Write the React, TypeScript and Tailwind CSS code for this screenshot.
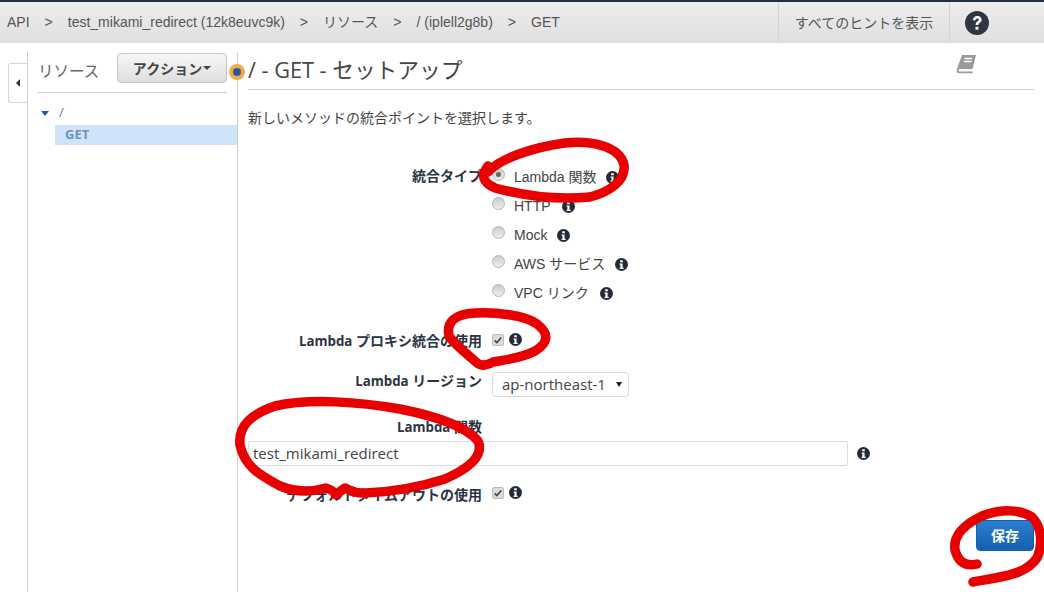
import React from "react";

function Info() {
  return (
    <svg viewBox="0 0 24 24" className="w-[13px] h-[13px] shrink-0" aria-hidden>
      <circle cx="12" cy="12" r="12" fill="#222b36" />
      <rect x="9.5" y="4" width="5" height="4" rx="1" fill="#fff" />
      <path d="M8.5 10h5.5v8h2v2.5H8.5V18h1.5v-5.5H8.5z" fill="#fff" />
    </svg>
  );
}

function Radio({ checked }: { checked?: boolean }) {
  return (
    <span className="w-[13px] h-[13px] rounded-full border border-[#b5b5b5] bg-gradient-to-b from-[#cccccc] to-[#efefef] flex items-center justify-center shrink-0">
      {checked && <span className="w-[5px] h-[5px] rounded-full bg-[#666]" />}
    </span>
  );
}

function Check() {
  return (
    <span className="w-[12px] h-[12px] rounded-[2px] border border-[#bbb] bg-[#dcdcdc] flex items-center justify-center shrink-0">
      <svg viewBox="0 0 12 12" className="w-[10px] h-[10px]">
        <path d="M2 6.5l2.6 2.6L10 3" fill="none" stroke="#444" strokeWidth="2" />
      </svg>
    </span>
  );
}

function RadioRow({ label, checked, gap }: { label: string; checked?: boolean; gap: string }) {
  return (
    <div className="h-[29px] flex items-center">
      <div className="-mt-[7px]"><Radio checked={checked} /></div>
      <span className="ml-[9px] text-[14px] text-[#444] font-['Liberation_Sans','Noto_Sans_CJK_JP',sans-serif]">{label}</span>
      <span className={gap}><Info /></span>
    </div>
  );
}

function Label({ children }: { children: React.ReactNode }) {
  return <div className="w-[234px] shrink-0 text-right text-[14px] font-bold text-[#2b3442] whitespace-nowrap">{children}</div>;
}

function Lambda() {
  return <span className="text-[13.3px]">Lambda</span>;
}

const strokes = [
  "M488 172C500 158 535 147 565 143C590 140 620 146 624 165C626 180 610 192 590 197C560 200 525 196 495 188C482 182 481 175 488 166",
  "M449 336C446 322 455 314 475 313C495 312 525 315 537 324C550 334 548 343 535 351C522 358 505 360 493 362C486 366 480 366 476 362C465 352 455 345 449 336",
  "M240 445C238 425 252 414 275 406C310 398 360 402 400 409C430 415 465 425 478 441C484 455 470 468 445 479C420 487 395 492 365 493C355 494 350 490 345 488C342 490 338 493 336 495C333 490 330 489 326 488C312 492 295 492 280 486C262 476 245 468 240 445",
  "M977 564C966 567 958 562 955 550C953 535 965 524 982 516C1000 509 1020 509 1032 517C1042 527 1043 545 1037 558C1028 571 1012 575 995 578C985 580 978 581 973 582",
];

export default function App() {
  return (
    <div className="relative w-[1044px] h-[592px] overflow-hidden bg-white font-['Open_Sans','Noto_Sans_CJK_JP',sans-serif] text-[#444]">
      <header className="h-[43px] border-t-2 border-[#232f3e] bg-gradient-to-b from-[#ececec] to-[#e0e0e0] flex items-center text-[14px] text-[#555]">
        <nav className="flex-1 flex items-center pl-[7px] whitespace-nowrap font-['Liberation_Sans','Noto_Sans_CJK_JP',sans-serif]">
          <span>API</span>
          <span className="mx-[15px]">&gt;</span>
          <span>test_mikami_redirect (12k8euvc9k)</span>
          <span className="mx-[15px]">&gt;</span>
          <span>リソース</span>
          <span className="mx-[15px]">&gt;</span>
          <span>/ (iplell2g8b)</span>
          <span className="mx-[15px]">&gt;</span>
          <span>GET</span>
        </nav>
        <div className="h-full w-[172px] border-x border-[#d2d2d2] flex items-center justify-center">すべてのヒントを表示</div>
        <div className="w-[94px] h-full flex items-center pl-[15px]">
          <svg viewBox="0 0 24 24" className="w-[24px] h-[24px]">
            <circle cx="12" cy="12" r="12" fill="#2f3640" />
            <path d="M7.8 9.2C8 6.5 10 5 12.3 5c2.6 0 4.3 1.6 4.3 3.7 0 1.8-1 2.6-2.2 3.4-.8.6-1 1-1 2h-2.8c0-1.9.5-2.7 1.7-3.6.9-.7 1.4-1.1 1.4-1.8 0-.8-.6-1.3-1.4-1.3-.9 0-1.5.6-1.6 1.8z" fill="#fff" />
            <rect x="10.5" y="15.8" width="2.9" height="2.9" fill="#fff" />
          </svg>
        </div>
      </header>

      <div className="flex h-[549px]">
        <div className="w-[27px] shrink-0 pl-[8px] pt-[20px]">
          <div className="w-[19px] h-[40px] rounded-l-[3px] border border-r-0 border-[#d5d5d5] flex items-center justify-center bg-white">
            <span className="w-0 h-0 border-y-[4px] border-y-transparent border-r-[4px] border-r-[#333]" />
          </div>
        </div>

        <aside className="relative w-[211px] shrink-0 border-x border-[#cfcfcf] mt-[9px]">
          <div className="flex items-center px-[10px] h-[40px]">
            <span className="text-[15.5px] text-[#666] w-[79px]">リソース</span>
            <button className="w-[110px] h-[30px] -mt-[8px] rounded-[4px] border border-[#c4c4c4] bg-gradient-to-b from-[#f8f8f8] to-[#dedede] text-[14px] font-bold text-[#444] flex items-center justify-center">
              アクション<span className="ml-[1px] w-0 h-0 border-x-[4px] border-x-transparent border-t-[4px] border-t-[#444]" />
            </button>
          </div>
          <div className="ml-[10px] w-[189px] border-t border-[#cfcfcf]" />
          <div className="h-[20px] mt-[10px] flex items-center pl-[13px] text-[13px] text-[#5b7fa8]">
            <span className="w-0 h-0 border-x-[4px] border-x-transparent border-t-[5px] border-t-[#1d5fae]" />
            <span className="ml-[10px]">/</span>
          </div>
          <div className="ml-[27px] h-[20px] mt-[2px] bg-[#cfe4f8] flex items-center pl-[10px] text-[13px] font-bold text-[#6b93bb]">GET</div>
          <span className="absolute -right-[8px] top-[12px] w-[16px] h-[16px] rounded-full bg-[#1f5f99] border-[4px] border-[#f6a84a]" />
        </aside>

        <main className="flex-1 px-[10px]">
          <div className="relative h-[47px] border-b border-[#cfcfcf] flex items-end pb-[3px]">
            <h1 className="text-[21.7px] leading-[32px] text-[#444] whitespace-nowrap">/ - GET - セットアップ</h1>
            <svg viewBox="0 0 22 20" className="absolute left-[708px] top-[11px] w-[22px] h-[20px]">
              <path d="M6 1h14l-3.5 14H4c-1.6 0-1.8 2.6 0 2.6h13l-.4 1.6H3C.6 19.2.6 16.5 1 14.8z" fill="#9a9a9a" />
              <path d="M8.5 4.5h7.5M8 7.5h7.5" stroke="#fff" strokeWidth="1.4" />
            </svg>
          </div>
          <p className="mt-[18px] text-[14px] leading-[20px] text-[#444]">新しいメソッドの統合ポイントを選択します。</p>

          <div className="flex mt-[35px]">
            <Label><div className="mt-[2px]">統合タイプ</div></Label>
            <div className="ml-[10px]">
              <RadioRow label="Lambda 関数" checked gap="ml-[10px]" />
              <RadioRow label="HTTP" gap="ml-[11px]" />
              <RadioRow label="Mock" gap="ml-[10px]" />
              <RadioRow label="AWS サービス" gap="ml-[10px]" />
              <RadioRow label="VPC リンク" gap="ml-[11px]" />
            </div>
          </div>

          <div className="flex items-center mt-[21px] h-[24px]">
            <Label><Lambda /> プロキシ統合の使用</Label>
            <div className="ml-[10px] flex items-center gap-[5px] -mt-[3px]"><Check /><Info /></div>
          </div>

          <div className="flex items-center mt-[14px] h-[34px]">
            <Label><div className="-mt-[6px]"><Lambda /> リージョン</div></Label>
            <div className="ml-[10px] w-[137px] h-[25px] border border-[#ddd] rounded-[3px] flex items-center justify-between pl-[9px] pr-[5px] text-[15px] text-[#444]">
              ap-northeast-1
              <span className="w-0 h-0 border-x-[3px] border-x-transparent border-t-[5px] border-t-[#222] mr-[1px]" />
            </div>
          </div>

          <div className="mt-[14px] h-[24px] flex items-center">
            <Label><Lambda /> 関数</Label>
          </div>
          <div className="flex items-center mt-[2px]">
            <div className="w-[600px] h-[25px] border border-[#ddd] rounded-[2px] flex items-center pl-[4px] text-[15px] text-[#444]">test_mikami_redirect</div>
            <span className="ml-[9px]"><Info /></span>
          </div>

          <div className="flex items-center mt-[16px] h-[24px]">
            <Label>デフォルトタイムアウトの使用</Label>
            <div className="ml-[10px] flex items-center gap-[5px] -mt-[3px]"><Check /><Info /></div>
          </div>

          <div className="flex justify-end mt-[14px]">
            <button className="w-[58px] h-[31px] rounded-[4px] bg-gradient-to-b from-[#2b7fd0] to-[#145fae] border border-[#1a5ea5] text-white text-[14px] font-bold">保存</button>
          </div>
        </main>
      </div>

      <svg className="absolute inset-0 w-[1044px] h-[592px] pointer-events-none" viewBox="0 0 1044 592">
        {strokes.map((d) => (
          <path key={d} d={d} fill="none" stroke="#e80000" strokeWidth="9.5" strokeLinecap="round" strokeLinejoin="round" />
        ))}
      </svg>
    </div>
  );
}
